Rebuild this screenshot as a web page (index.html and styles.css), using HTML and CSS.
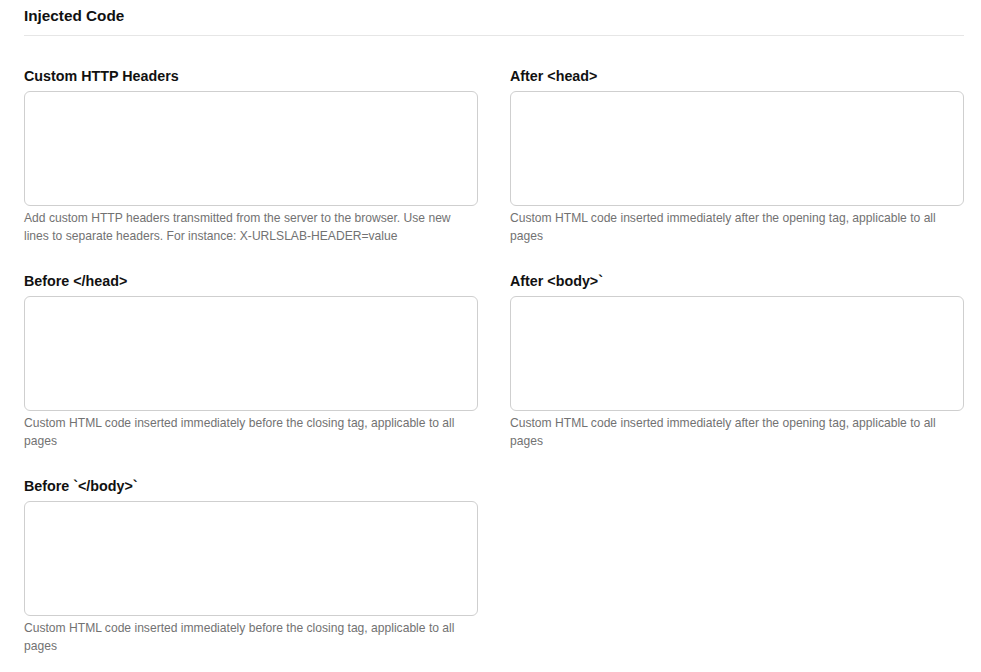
FILE: index.html
```html
<!DOCTYPE html>
<html lang="en">
<head>
    <meta charset="UTF-8">
    <meta name="viewport" content="width=device-width, initial-scale=1.0">
    <title>Injected Code</title>
    <link rel="stylesheet" href="styles.css">
</head>
<body>
    <div class="settings">
        <h2 class="settings-title">Injected Code</h2>

        <div class="fields">
            <div class="field">
                <label class="field-label" for="http-headers">Custom HTTP Headers</label>
                <textarea id="http-headers" class="field-input"></textarea>
                <p class="field-help">Add custom HTTP headers transmitted from the server to the browser. Use new lines to separate headers. For instance: X-URLSLAB-HEADER=value</p>
            </div>

            <div class="field">
                <label class="field-label" for="after-head">After &lt;head&gt;</label>
                <textarea id="after-head" class="field-input"></textarea>
                <p class="field-help">Custom HTML code inserted immediately after the opening tag, applicable to all pages</p>
            </div>

            <div class="field">
                <label class="field-label" for="before-head">Before &lt;/head&gt;</label>
                <textarea id="before-head" class="field-input"></textarea>
                <p class="field-help">Custom HTML code inserted immediately before the closing tag, applicable to all pages</p>
            </div>

            <div class="field">
                <label class="field-label" for="after-body">After &lt;body&gt;`</label>
                <textarea id="after-body" class="field-input"></textarea>
                <p class="field-help">Custom HTML code inserted immediately after the opening tag, applicable to all pages</p>
            </div>

            <div class="field">
                <label class="field-label" for="before-body">Before `&lt;/body&gt;`</label>
                <textarea id="before-body" class="field-input"></textarea>
                <p class="field-help">Custom HTML code inserted immediately before the closing tag, applicable to all pages</p>
            </div>
        </div>
    </div>
</body>
</html>
```

FILE: styles.css
```css
body {
    font-family: "Liberation Sans", Arial, sans-serif;
    margin: 0;
    padding: 0 17px 0 24px;
    background: #fff;
    color: #111;
}
.settings {
    width: 940px;
}
.settings-title {
    margin: 0;
    padding: 6px 0 9px;
    font-size: 15.3px;
    line-height: 20px;
    font-weight: 700;
    border-bottom: 1px solid #e6e6e6;
}
.fields {
    display: grid;
    grid-template-columns: 1fr 1fr;
    column-gap: 32px;
    row-gap: 28px;
    margin-top: 32px;
}
.field {
    display: flex;
    flex-direction: column;
}
.field-label {
    font-size: 14.3px;
    line-height: 16px;
    font-weight: 700;
    margin-bottom: 7px;
}
.field-input {
    box-sizing: border-box;
    height: 115px;
    border: 1px solid #cfcfcf;
    border-radius: 6px;
    resize: none;
    font-family: inherit;
    margin: 0;
}
.field-help {
    margin: 3px 0 0;
    font-size: 12.1px;
    line-height: 18px;
    color: #727272;
}
```
